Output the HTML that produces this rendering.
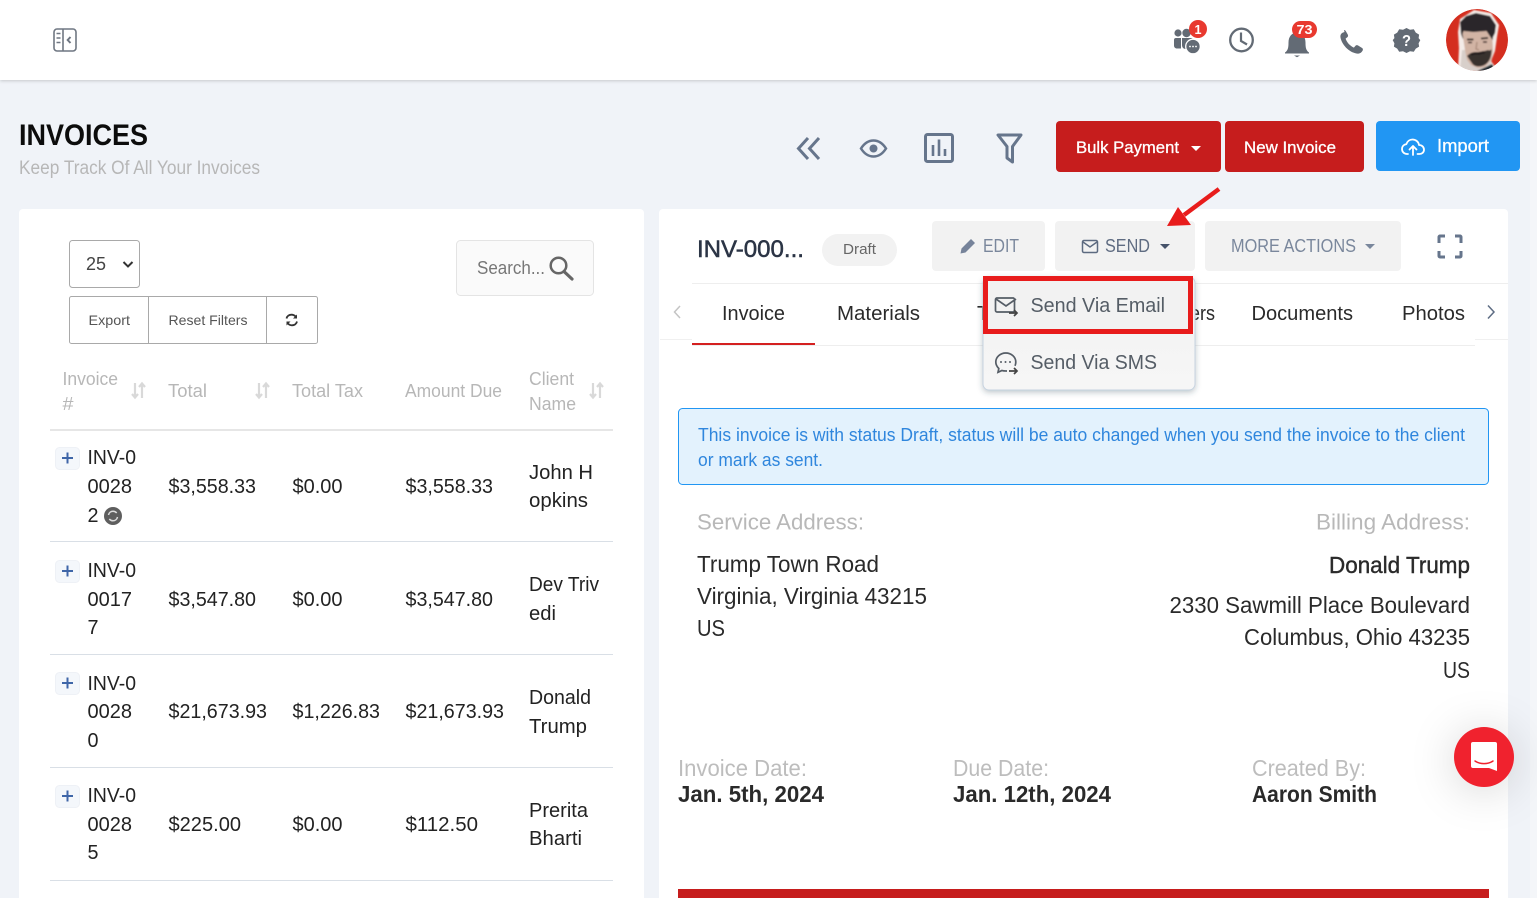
<!DOCTYPE html>
<html lang="en"><head><meta charset="utf-8"><title>Invoices</title>
<style>
html,body{margin:0;padding:0;width:1537px;height:898px;overflow:hidden;background:#f0f3f8}
svg{display:block;font-family:"Liberation Sans",Arial,sans-serif}
text{white-space:pre}
.h{font-size:18px;fill:#b7b7b7}
.c{font-size:20px;fill:#222}
.b{font-size:23px;fill:#2a2a2a}
.g{font-size:23px;fill:#bdbdbd}
.s{font-size:14px;fill:#555}
.tab{font-size:20px;fill:#2a2a2a}
.btn{font-size:18px;fill:#7a879c}
.w{font-size:17px;fill:#fff;stroke:#fff;stroke-width:.3px}
.bl{font-size:18px;fill:#2f86dd}
</style></head><body>
<svg width="1537" height="898" viewBox="0 0 1537 898" xmlns="http://www.w3.org/2000/svg">
<defs>
<filter id="hs" x="-5%" y="-20%" width="110%" height="150%"><feDropShadow dx="0" dy="1" stdDeviation="1.5" flood-color="#000" flood-opacity=".18"/></filter>
<filter id="dd" x="-20%" y="-20%" width="140%" height="140%"><feDropShadow dx="0" dy="2" stdDeviation="3" flood-color="#345" flood-opacity=".3"/></filter>
<filter id="chat" x="-150%" y="-150%" width="400%" height="400%"><feDropShadow dx="0" dy="4" stdDeviation="22" flood-color="#000" flood-opacity=".16"/></filter>
<filter id="soft"><feGaussianBlur stdDeviation=".7"/></filter>
<clipPath id="av"><circle cx="1477" cy="40" r="31"/></clipPath>
<linearGradient id="ddg" x1="0" y1="0" x2="0" y2="1"><stop offset="0" stop-color="#f2f2f2"/><stop offset="1" stop-color="#f6f6f6"/></linearGradient>
<g id="sort"><path d="M5 1v14M2 12l3 3.500 3-3.500M12 16V2M9 5l3-3.500L15 5" fill="none" stroke="#d9d9d9" stroke-width="2.200"/></g>
</defs>

<rect width="1537" height="898" fill="#f0f3f8"/>
<rect x="1530" width="7" height="898" fill="#f4f6f9"/>

<!-- top bar -->
<rect width="1537" height="80" fill="#fff" filter="url(#hs)"/>
<g fill="none" stroke="#6f7782" stroke-width="1.600">
<rect x="54" y="29" width="22" height="22" rx="3"/>
<path d="M63 29v22M56.500 33.500h4M56.500 38h4M56.500 42.500h4"/>
<path d="M70.500 37l-2.800 3 2.800 3" stroke-width="2"/>
</g>

<!-- team -->
<g fill="#636b75">
<circle cx="1178" cy="33" r="3.600"/><circle cx="1186.500" cy="33" r="4.200"/>
<path d="M1174 40a2 2 0 0 1 2-2h5v10.500h-4c-1.800 0-3-1.200-3-3zM1182 38h9a2 2 0 0 1 2 2v9h-7c-2.500 0-4-1.500-4-4z"/>
<circle cx="1193" cy="46.500" r="7.300" stroke="#fff" stroke-width="1.300"/>
</g>
<g fill="#fff"><circle cx="1190" cy="46.500" r=".9"/><circle cx="1193" cy="46.500" r=".9"/><circle cx="1196" cy="46.500" r=".9"/></g>
<circle cx="1198" cy="29" r="9" fill="#e8392f"/>
<text x="1194.500" y="34" font-size="13" font-weight="700" fill="#fff" textLength="7" lengthAdjust="spacingAndGlyphs">1</text>

<!-- clock -->
<circle cx="1241.500" cy="40" r="11.300" fill="none" stroke="#636b75" stroke-width="2.300"/>
<path d="M1241 32.500V41l6 3.500" fill="none" stroke="#636b75" stroke-width="2.200"/>

<!-- bell -->
<path d="M1285 52.500c3-2 3.500-5 3.500-10 0-6 3.500-10 8.500-10s8.500 4 8.500 10c0 5 .5 8 3.500 10v1h-24z" fill="#636b75"/>
<path d="M1294 55.500h6l-3 1.800z" fill="#636b75"/>
<rect x="1292" y="21" width="25" height="17" rx="8.500" fill="#e8392f"/>
<text x="1296.500" y="34" font-size="13" font-weight="700" fill="#fff" textLength="16" lengthAdjust="spacingAndGlyphs">73</text>

<!-- phone -->
<path d="M1344.500 32c-3 .8-4.500 2.500-4 5.500 1.300 7 8 14.500 16 16 2.500.5 5-.6 6.300-3.300.3-.9 0-1.700-.7-2.200l-4-2.500c-1-.6-2-.4-2.700.4l-1.500 1.700c-3.500-1.500-7-5-8.300-9l1.700-1.300c.8-.8 1-1.800.5-2.700l-2-3.500c-.5-.8-1.300-1.200-1.800-1.100z" fill="#636b75"/>

<!-- help -->
<path d="M1406.500 28l3.500 1.800 3.800-.5 2 3.300 3.300 2-.5 3.500 1.700 2-1.700 3.200.5 3.300-3.300 2-2 3.200-3.800-.5-3.500 1.700-3.500-1.700-3.800.5-2-3.200-3.300-2 .5-3.300-1.700-3.200 1.700-2-.5-3.500 3.300-2 2-3.300 3.800.5z" fill="#636b75"/>
<text x="1402" y="46" font-size="16" font-weight="700" fill="#fff" textLength="9" lengthAdjust="spacingAndGlyphs">?</text>

<!-- avatar -->
<g clip-path="url(#av)">
<circle cx="1477" cy="40" r="31" fill="#d42e1f"/>
<g filter="url(#soft)">
<path d="M1458 72l1-24-1-16 2-13 14-9 17 3 8 12-2 12-2 14-4 10 8 11z" fill="#f4ece8"/>
<path d="M1460 70l2-20h31l-2 15 6 8z" fill="#d8cfca"/>
<path d="M1461 34l-1-12 6-6 10-3 14 3 6 9-1 8-2 4-1 7-6-9-13-2-8 0-2 6z" fill="#292829"/>
<path d="M1462.500 34l1-3 10 1 13-1 6 9 .5 11-2 9-6 7-7 1-7-3-4-5-2-10-1.500-10z" fill="#d2b4a4"/>
<path d="M1467 56c3-3 5-4 9-3.500 4-1 8-1 12-2.500 2 1 3 0 3.500-1 .5 7-2 14-8 16.500-5 2-10 1-12-3z" fill="#37302e"/>
<path d="M1471 54.500c2-1 5-1.500 8-1 2-.5 4-1.500 6-1" stroke="#211b1a" stroke-width="2.500" fill="none"/>
<path d="M1467 39.500l6.500 0M1481 38.500l7-.5" stroke="#2b2321" stroke-width="1.800" fill="none"/>
<path d="M1468 42.500h4M1483 42h4" stroke="#3a2c28" stroke-width="1.400"/>
<path d="M1477 42l-1 7 3 1" stroke="#a88878" stroke-width="1.200" fill="none"/>
<path d="M1461 66l11 6h-14z" fill="#d5d5d3"/>
<path d="M1477 71l9-4 6-3 6 9z" fill="#1d2b30"/>
</g>
</g>

<!-- page head -->
<text x="19" y="145" font-size="30" font-weight="700" fill="#0c0c0c" textLength="129" lengthAdjust="spacingAndGlyphs">INVOICES</text>
<text x="19" y="174" font-size="19" fill="#b7b7b7" textLength="241" lengthAdjust="spacingAndGlyphs">Keep Track Of All Your Invoices</text>

<path d="M808 138l-9.500 10.500 9.500 10.500M819 138l-9.500 10.500 9.500 10.500" fill="none" stroke="#66758c" stroke-width="3"/>
<path d="M861 148.500c3.500-5.500 8-8 12.500-8s9 2.500 12.500 8c-3.500 5.500-8 8-12.500 8s-9-2.500-12.500-8z" fill="none" stroke="#66758c" stroke-width="2.500"/>
<circle cx="873.500" cy="148.500" r="4" fill="#66758c"/>
<rect x="925.500" y="134.500" width="27" height="27" rx="2" fill="none" stroke="#66758c" stroke-width="3"/>
<path d="M933 145v11M939 139.500v16.500M945 149v7" stroke="#66758c" stroke-width="2.600" fill="none"/>
<path d="M998 135h23l-8.500 11.500v15.500l-5.500-4v-11.500z" fill="none" stroke="#66758c" stroke-width="3" stroke-linejoin="round"/>

<rect x="1056" y="121" width="165" height="51" rx="4" fill="#c61d1d"/>
<text class="w" x="1076" y="153" textLength="103" lengthAdjust="spacingAndGlyphs">Bulk Payment</text>
<path d="M1191 146h10l-5 5z" fill="#fff"/>
<rect x="1225" y="121" width="139" height="51" rx="4" fill="#c61d1d"/>
<text class="w" x="1244" y="153" textLength="92" lengthAdjust="spacingAndGlyphs">New Invoice</text>
<rect x="1376" y="121" width="144" height="50" rx="4" fill="#2196f3"/>
<path d="M1408 154h-1c-3 0-5-2.200-5-5 0-2.600 1.800-4.500 4.300-4.800 1-3 3.500-4.700 6.200-4.700 3.500 0 6 2.400 6.500 5.500 2.800 0 5 2 5 4.700 0 2.500-2 4.300-4.500 4.300h-2M1413 155v-8.500M1409.500 149.500l3.500-3.500 3.500 3.500" fill="none" stroke="#fff" stroke-width="1.800" stroke-linecap="round" stroke-linejoin="round"/>
<text x="1437" y="152" font-size="18" fill="#fff" stroke="#fff" stroke-width=".3" textLength="52" lengthAdjust="spacingAndGlyphs">Import</text>

<!-- left card -->
<rect x="19" y="209" width="625" height="700" rx="4" fill="#fff"/>
<rect x="69.500" y="240.500" width="70" height="47" rx="3" fill="#fff" stroke="#a9a9a9"/>
<text x="86" y="270" font-size="18" fill="#444" textLength="20" lengthAdjust="spacingAndGlyphs">25</text>
<path d="M123.500 262l4.500 4.500 4.500-4.500" fill="none" stroke="#333" stroke-width="2"/>
<rect x="69.500" y="296.500" width="248" height="47" rx="2" fill="#fff" stroke="#a9a9a9"/>
<path d="M148.500 296.500v47M266.500 296.500v47" stroke="#a9a9a9"/>
<text class="s" x="88.500" y="325" textLength="41.500" lengthAdjust="spacingAndGlyphs">Export</text>
<text class="s" x="168.500" y="325" textLength="79" lengthAdjust="spacingAndGlyphs">Reset Filters</text>
<path d="M286.500 318.500c.6-2.500 2.700-3.800 5-3.800 1.800 0 3.200.8 4.300 2M297 321.500c-.6 2.500-2.700 3.800-5 3.800-1.800 0-3.200-.8-4.300-2" fill="none" stroke="#333" stroke-width="1.800"/>
<path d="M297 314.500v4h-4zM286.500 325.500v-4h4z" fill="#333"/>
<rect x="456.500" y="240.500" width="137" height="55" rx="4" fill="#fafafa" stroke="#e4e4e4"/>
<text x="477" y="274" font-size="18" fill="#777" textLength="68" lengthAdjust="spacingAndGlyphs">Search...</text>
<circle cx="558.500" cy="265.500" r="7.800" fill="none" stroke="#666" stroke-width="2.500"/>
<path d="M564 271.500l8 7.500" stroke="#666" stroke-width="3.200" stroke-linecap="round"/>

<text class="h" x="62.500" y="385" textLength="55.500" lengthAdjust="spacingAndGlyphs">Invoice</text>
<text class="h" x="62.500" y="410" textLength="11" lengthAdjust="spacingAndGlyphs">#</text>
<use href="#sort" x="130" y="382"/>
<text class="h" x="168" y="397" textLength="39" lengthAdjust="spacingAndGlyphs">Total</text>
<use href="#sort" x="254" y="382"/>
<text class="h" x="292" y="397" textLength="71" lengthAdjust="spacingAndGlyphs">Total Tax</text>
<text class="h" x="405" y="397" textLength="97" lengthAdjust="spacingAndGlyphs">Amount Due</text>
<text class="h" x="529" y="385" textLength="45" lengthAdjust="spacingAndGlyphs">Client</text>
<text class="h" x="529" y="410" textLength="47" lengthAdjust="spacingAndGlyphs">Name</text>
<use href="#sort" x="588" y="382"/>
<rect x="50" y="429" width="563" height="2" fill="#e6e6e6"/>

<!-- row 1 -->
<rect x="55.500" y="447.500" width="24" height="22" rx="4" fill="#f4f7fb" stroke="#eef1f6"/>
<path d="M62 458h11M67.500 452.500v11" stroke="#3f66a8" stroke-width="2"/>
<text class="c" x="87.500" y="464" textLength="48.500" lengthAdjust="spacingAndGlyphs">INV-0</text>
<text class="c" x="87.500" y="493" textLength="44.500" lengthAdjust="spacingAndGlyphs">0028</text>
<text class="c" x="87.500" y="522" textLength="11" lengthAdjust="spacingAndGlyphs">2</text>
<circle cx="113" cy="516" r="9" fill="#5e5e5e"/>
<path d="M108.500 515c.5-2.500 2.500-3.800 4.500-3.800 1.500 0 2.800.7 3.700 1.800M117.500 517c-.5 2.500-2.500 3.800-4.500 3.800-1.500 0-2.800-.7-3.700-1.800" fill="none" stroke="#ddd" stroke-width="1.500"/>
<text class="c" x="168.500" y="493" textLength="87.500" lengthAdjust="spacingAndGlyphs">$3,558.33</text>
<text class="c" x="292.500" y="493" textLength="50" lengthAdjust="spacingAndGlyphs">$0.00</text>
<text class="c" x="405.500" y="493" textLength="87.500" lengthAdjust="spacingAndGlyphs">$3,558.33</text>
<text class="c" x="529" y="479" textLength="64" lengthAdjust="spacingAndGlyphs">John H</text>
<text class="c" x="529" y="507" textLength="59" lengthAdjust="spacingAndGlyphs">opkins</text>
<rect x="50" y="541" width="563" height="1" fill="#d9dfe6"/>

<!-- row 2 -->
<rect x="55.500" y="560.500" width="24" height="22" rx="4" fill="#f4f7fb" stroke="#eef1f6"/>
<path d="M62 571h11M67.500 565.500v11" stroke="#3f66a8" stroke-width="2"/>
<text class="c" x="87.500" y="577" textLength="48.500" lengthAdjust="spacingAndGlyphs">INV-0</text>
<text class="c" x="87.500" y="606" textLength="44.500" lengthAdjust="spacingAndGlyphs">0017</text>
<text class="c" x="87.500" y="634" textLength="11" lengthAdjust="spacingAndGlyphs">7</text>
<text class="c" x="168.500" y="606" textLength="87.500" lengthAdjust="spacingAndGlyphs">$3,547.80</text>
<text class="c" x="292.500" y="606" textLength="50" lengthAdjust="spacingAndGlyphs">$0.00</text>
<text class="c" x="405.500" y="606" textLength="87.500" lengthAdjust="spacingAndGlyphs">$3,547.80</text>
<text class="c" x="529" y="591" textLength="70" lengthAdjust="spacingAndGlyphs">Dev Triv</text>
<text class="c" x="529" y="620" textLength="27" lengthAdjust="spacingAndGlyphs">edi</text>
<rect x="50" y="654" width="563" height="1" fill="#d9dfe6"/>

<!-- row 3 -->
<rect x="55.500" y="672.500" width="24" height="22" rx="4" fill="#f4f7fb" stroke="#eef1f6"/>
<path d="M62 683h11M67.500 677.500v11" stroke="#3f66a8" stroke-width="2"/>
<text class="c" x="87.500" y="690" textLength="48.500" lengthAdjust="spacingAndGlyphs">INV-0</text>
<text class="c" x="87.500" y="718" textLength="44.500" lengthAdjust="spacingAndGlyphs">0028</text>
<text class="c" x="87.500" y="747" textLength="11" lengthAdjust="spacingAndGlyphs">0</text>
<text class="c" x="168.500" y="718" textLength="98.500" lengthAdjust="spacingAndGlyphs">$21,673.93</text>
<text class="c" x="292.500" y="718" textLength="87.500" lengthAdjust="spacingAndGlyphs">$1,226.83</text>
<text class="c" x="405.500" y="718" textLength="98.500" lengthAdjust="spacingAndGlyphs">$21,673.93</text>
<text class="c" x="529" y="704" textLength="62" lengthAdjust="spacingAndGlyphs">Donald</text>
<text class="c" x="529" y="733" textLength="58" lengthAdjust="spacingAndGlyphs">Trump</text>
<rect x="50" y="767" width="563" height="1" fill="#d9dfe6"/>

<!-- row 4 -->
<rect x="55.500" y="785.500" width="24" height="22" rx="4" fill="#f4f7fb" stroke="#eef1f6"/>
<path d="M62 796h11M67.500 790.500v11" stroke="#3f66a8" stroke-width="2"/>
<text class="c" x="87.500" y="802" textLength="48.500" lengthAdjust="spacingAndGlyphs">INV-0</text>
<text class="c" x="87.500" y="831" textLength="44.500" lengthAdjust="spacingAndGlyphs">0028</text>
<text class="c" x="87.500" y="859" textLength="11" lengthAdjust="spacingAndGlyphs">5</text>
<text class="c" x="168.500" y="831" textLength="72.500" lengthAdjust="spacingAndGlyphs">$225.00</text>
<text class="c" x="292.500" y="831" textLength="50" lengthAdjust="spacingAndGlyphs">$0.00</text>
<text class="c" x="405.500" y="831" textLength="72.500" lengthAdjust="spacingAndGlyphs">$112.50</text>
<text class="c" x="529" y="817" textLength="59" lengthAdjust="spacingAndGlyphs">Prerita</text>
<text class="c" x="529" y="845" textLength="53" lengthAdjust="spacingAndGlyphs">Bharti</text>
<rect x="50" y="880" width="563" height="1" fill="#d9dfe6"/>

<!-- right card -->
<rect x="659" y="209" width="849" height="700" rx="4" fill="#fff"/>
<text x="697" y="257" font-size="24" fill="#2b3445" stroke="#2b3445" stroke-width=".5" textLength="107" lengthAdjust="spacingAndGlyphs">INV-000...</text>
<rect x="822" y="234" width="75" height="32" rx="16" fill="#f2f2f2"/>
<text x="843" y="254" font-size="15" fill="#666" textLength="33" lengthAdjust="spacingAndGlyphs">Draft</text>

<rect x="932" y="221" width="113" height="50" rx="4" fill="#f2f2f2"/>
<path d="M960.500 253.500l1-5 9.500-9.500 4 4-9.500 9.500z" fill="#76839a"/>
<text class="btn" x="983" y="252" textLength="36" lengthAdjust="spacingAndGlyphs">EDIT</text>
<rect x="1055" y="221" width="140" height="50" rx="4" fill="#f2f2f2"/>
<rect x="1082.500" y="240.500" width="15" height="12" rx="1.500" fill="none" stroke="#5c6a80" stroke-width="1.500"/>
<path d="M1083 242l7 5 7-5" fill="none" stroke="#5c6a80" stroke-width="1.500"/>
<text x="1105" y="252" font-size="18" fill="#5f6c82" textLength="45" lengthAdjust="spacingAndGlyphs">SEND</text>
<path d="M1160 244h10l-5 5z" fill="#46536a"/>
<rect x="1205" y="221" width="196" height="50" rx="4" fill="#f2f2f2"/>
<text class="btn" x="1231" y="252" textLength="125" lengthAdjust="spacingAndGlyphs">MORE ACTIONS</text>
<path d="M1365 244h10l-5 5z" fill="#7a879c"/>
<path d="M1445 236h-5a1 1 0 0 0-1 1v6M1455 236h5a1 1 0 0 1 1 1v6M1461 251v5a1 1 0 0 1-1 1h-5M1445 257h-5a1 1 0 0 1-1-1v-5" fill="none" stroke="#66758c" stroke-width="3"/>

<!-- tabs -->
<rect x="692" y="283" width="816" height="1" fill="#eee"/>
<rect x="660" y="339" width="32" height="1" fill="#f0f0f0"/>
<rect x="1475" y="339" width="33" height="1" fill="#f0f0f0"/>
<rect x="692" y="345" width="783" height="1" fill="#eee"/>
<rect x="692" y="343" width="123" height="2" fill="#d42020"/>
<path d="M680 306l-5.500 6 5.500 6" fill="none" stroke="#c4c4c4" stroke-width="1.500"/>
<path d="M1488 305.500l6 6.500-6 6.500" fill="none" stroke="#5e6d84" stroke-width="1.500"/>
<text class="tab" x="722" y="320" textLength="63" lengthAdjust="spacingAndGlyphs">Invoice</text>
<text class="tab" x="837" y="320" textLength="83" lengthAdjust="spacingAndGlyphs">Materials</text>
<text class="tab" x="977" y="320" textLength="12" lengthAdjust="spacingAndGlyphs">T</text>
<text class="tab" x="1190" y="320" textLength="25" lengthAdjust="spacingAndGlyphs">ers</text>
<text class="tab" x="1251.500" y="320" textLength="101.500" lengthAdjust="spacingAndGlyphs">Documents</text>
<text class="tab" x="1402" y="320" textLength="63" lengthAdjust="spacingAndGlyphs">Photos</text>

<!-- alert -->
<rect x="678.500" y="408.500" width="810" height="76" rx="4" fill="#e3f2fd" stroke="#2196f3"/>
<text class="bl" x="698" y="441" textLength="767" lengthAdjust="spacingAndGlyphs">This invoice is with status Draft, status will be auto changed when you send the invoice to the client</text>
<text class="bl" x="698" y="466" textLength="125" lengthAdjust="spacingAndGlyphs">or mark as sent.</text>

<!-- addresses -->
<text x="697" y="529.500" font-size="22" fill="#b8b8b8" textLength="167" lengthAdjust="spacingAndGlyphs">Service Address:</text>
<text x="1316" y="529.500" font-size="22" fill="#b8b8b8" textLength="154" lengthAdjust="spacingAndGlyphs">Billing Address:</text>
<text class="b" x="697" y="572" textLength="182" lengthAdjust="spacingAndGlyphs">Trump Town Road</text>
<text class="b" x="697" y="604" textLength="230" lengthAdjust="spacingAndGlyphs">Virginia, Virginia 43215</text>
<text class="b" x="697" y="636" textLength="28" lengthAdjust="spacingAndGlyphs">US</text>
<text class="b" x="1329" y="573" stroke="#2a2a2a" stroke-width=".4" textLength="141" lengthAdjust="spacingAndGlyphs">Donald Trump</text>
<text class="b" x="1169.500" y="613" textLength="300.500" lengthAdjust="spacingAndGlyphs">2330 Sawmill Place Boulevard</text>
<text class="b" x="1244" y="645" textLength="226" lengthAdjust="spacingAndGlyphs">Columbus, Ohio 43235</text>
<text class="b" x="1443" y="678" textLength="27" lengthAdjust="spacingAndGlyphs">US</text>

<!-- dates -->
<text class="g" x="678" y="776" textLength="129" lengthAdjust="spacingAndGlyphs">Invoice Date:</text>
<text x="678" y="802" font-size="23" font-weight="700" fill="#2a2a2a" textLength="146" lengthAdjust="spacingAndGlyphs">Jan. 5th, 2024</text>
<text class="g" x="953" y="776" textLength="96" lengthAdjust="spacingAndGlyphs">Due Date:</text>
<text x="953" y="802" font-size="23" font-weight="700" fill="#2a2a2a" textLength="158" lengthAdjust="spacingAndGlyphs">Jan. 12th, 2024</text>
<text class="g" x="1252" y="776" textLength="114" lengthAdjust="spacingAndGlyphs">Created By:</text>
<text x="1252" y="802" font-size="23" font-weight="700" fill="#2a2a2a" textLength="125" lengthAdjust="spacingAndGlyphs">Aaron Smith</text>

<rect x="678" y="889" width="811" height="9" fill="#c61d1d"/>

<!-- dropdown -->
<rect x="983" y="277" width="212" height="113" rx="6" fill="url(#ddg)" stroke="#c6d3e0" filter="url(#dd)"/>
<rect x="985.500" y="278.500" width="205" height="53" fill="#f2f2f2" stroke="#e81c1c" stroke-width="5"/>
<rect x="995.500" y="298" width="19" height="14" rx="1.500" fill="none" stroke="#555d66" stroke-width="1.700"/>
<path d="M996 299l10 7 10-7" fill="none" stroke="#555d66" stroke-width="1.700"/>
<path d="M1009 313h8M1014 310l3 3-3 3" fill="none" stroke="#444" stroke-width="1.700"/>
<text x="1030.500" y="312" font-size="20" fill="#555d66" textLength="134.500" lengthAdjust="spacingAndGlyphs">Send Via Email</text>
<path d="M1007 371c-2 0-4 0-5-.5l-4 1.800 .8-3.800c-2-2-3-4-3-6.500 0-5 4.500-9 10-9s10 4 10 9c0 1.500-.3 2.700-.8 3.800" fill="none" stroke="#555d66" stroke-width="1.700"/>
<path d="M1009 371h8M1014 368l3 3-3 3" fill="none" stroke="#444" stroke-width="1.700"/>
<g fill="#555d66"><circle cx="1001" cy="362" r="1"/><circle cx="1005.500" cy="362" r="1"/><circle cx="1010" cy="362" r="1"/></g>
<text x="1030.500" y="369" font-size="20" fill="#555d66" textLength="126.500" lengthAdjust="spacingAndGlyphs">Send Via SMS</text>

<!-- arrow -->
<path d="M1219 189l-35 26" stroke="#e81c1c" stroke-width="4.500"/>
<path d="M1167 226l11-19 13 18z" fill="#e81c1c"/>

<!-- chat -->
<circle cx="1484" cy="757" r="30" fill="#f0222e" filter="url(#chat)"/>
<path d="M1473 742h22a2 2 0 0 1 2 2v27l-8-3h-16a2 2 0 0 1-2-2v-22a2 2 0 0 1 2-2z" fill="#fff"/>
<path d="M1475 761c5 3.500 13 3.500 18 0" fill="none" stroke="#f0222e" stroke-width="1.500" stroke-linecap="round"/>
</svg>
</body></html>
